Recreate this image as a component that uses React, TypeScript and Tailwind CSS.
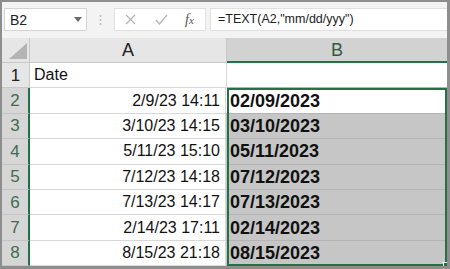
import React from "react";

const rows = [
  { n: 1, a: "Date", b: "", sel: false },
  { n: 2, a: "2/9/23 14:11", b: "02/09/2023", sel: true },
  { n: 3, a: "3/10/23 14:15", b: "03/10/2023", sel: true },
  { n: 4, a: "5/11/23 15:10", b: "05/11/2023", sel: true },
  { n: 5, a: "7/12/23 14:18", b: "07/12/2023", sel: true },
  { n: 6, a: "7/13/23 14:17", b: "07/13/2023", sel: true },
  { n: 7, a: "2/14/23 17:11", b: "02/14/2023", sel: true },
  { n: 8, a: "8/15/23 21:18", b: "08/15/2023", sel: true },
];

export default function App() {
  return (
    <div
      className="w-[450px] h-[269px] box-border overflow-hidden border-t-2 border-l-2 border-r-[3px] border-b-[3px] border-[#8e8e8e] bg-[#f3f3f3] flex flex-col leading-none"
      style={{ fontFamily: '"Liberation Sans", Arial, sans-serif' }}
    >
      {/* toolbar */}
      <div className="h-[36px] shrink-0 flex items-start pt-[6px] pl-[2px]">
        <div className="w-[83px] h-[23px] bg-white border border-[#d4d4d4] flex items-center justify-between pl-[5px] pr-[4px] text-[14px] text-[#222]">
          <span>B2</span>
          <svg width="8" height="5" viewBox="0 0 8 5">
            <path d="M0 0 L8 0 L4 5 Z" fill="#6b6b6b" />
          </svg>
        </div>
        <div className="w-[27px] h-[23px] flex items-center justify-center">
          <svg width="3" height="12" viewBox="0 0 3 12">
            <circle cx="1.5" cy="2" r="1" fill="#b8b8b8" />
            <circle cx="1.5" cy="6" r="1" fill="#b8b8b8" />
            <circle cx="1.5" cy="10" r="1" fill="#b8b8b8" />
          </svg>
        </div>
        <div className="w-[92px] h-[23px] bg-white border border-[#e0e0e0] flex items-center pl-[9px]">
          <svg width="11" height="11" viewBox="0 0 11 11" className="ml-[1px]">
            <path d="M1 1 L10 10 M10 1 L1 10" stroke="#b5b5b5" strokeWidth="1.3" />
          </svg>
          <svg width="13" height="11" viewBox="0 0 13 11" className="ml-[19px]">
            <path d="M1 6 L4.5 10 L12 1" stroke="#b5b5b5" strokeWidth="1.3" fill="none" />
          </svg>
          <span
            className="ml-[17px] text-[14px] italic text-[#555]"
            style={{ fontFamily: '"Liberation Serif", "Times New Roman", serif' }}
          >
            f<span className="text-[11px]">x</span>
          </span>
        </div>
        <div className="ml-[4px] flex-1 h-[23px] bg-white border border-[#e0e0e0] border-r-0 flex items-center pl-[7px] text-[12.5px] text-[#222] whitespace-nowrap">
          =TEXT(A2,"mm/dd/yyy")
        </div>
      </div>

      {/* header row */}
      <div className="h-[25px] shrink-0 flex">
        <div className="w-[28px] h-full bg-[#e6e6e6] border-r border-b border-[#c8c8c8] flex items-end justify-end pr-[2px] pb-[3px]">
          <svg width="18" height="16" viewBox="0 0 18 16">
            <path d="M18 0 L18 16 L0 16 Z" fill="#b4b4b4" />
          </svg>
        </div>
        <div className="w-[197px] h-full bg-[#e6e6e6] border-r border-b border-[#c8c8c8] flex items-center justify-center text-[18px] text-[#222]">
          A
        </div>
        <div className="flex-1 h-full bg-[#d2d2d2] border-b-2 border-[#217346] flex items-center justify-center text-[18px] text-[#305a40]">
          B
        </div>
      </div>

      {/* grid */}
      <div className="relative flex-1 min-h-0 flex flex-col bg-white">
        {rows.map((r) => (
          <div key={r.n} className="h-[25.4px] shrink-0 flex">
            <div
              className={`w-[28px] h-full flex items-center justify-center text-[17px] border-b ${
                r.sel
                  ? "bg-[#d6d6d6] text-[#3f6b4f] border-[#c4c4c4] border-r-2 border-r-[#217346]"
                  : "bg-[#e6e6e6] text-[#222] border-[#c8c8c8] border-r border-r-[#c8c8c8]"
              }`}
            >
              {r.n}
            </div>
            <div
              className={`h-full flex items-center border-b border-r border-[#d8d8d8] text-[16px] text-[#111] ${
                r.n === 1 ? "w-[197px] justify-start pl-[4px]" : "w-[196px] justify-end pr-[5px]"
              }`}
            >
              {r.a}
            </div>
            <div
              className={`flex-1 h-full flex items-center border-b border-[#b4b4b4] pl-[4px] text-[18px] font-bold text-[#111] ${
                r.sel && r.n !== 2 ? "bg-[#c6c6c6]" : "bg-white"
              }`}
            >
              {r.b}
            </div>
          </div>
        ))}
        {/* selection outline */}
        <div className="absolute left-[225px] right-0 top-[25px] bottom-0 border-2 border-[#217346] pointer-events-none" />
        <div className="absolute right-[-1px] bottom-[-1px] w-[5px] h-[5px] bg-[#217346] border border-white" />
      </div>
    </div>
  );
}
